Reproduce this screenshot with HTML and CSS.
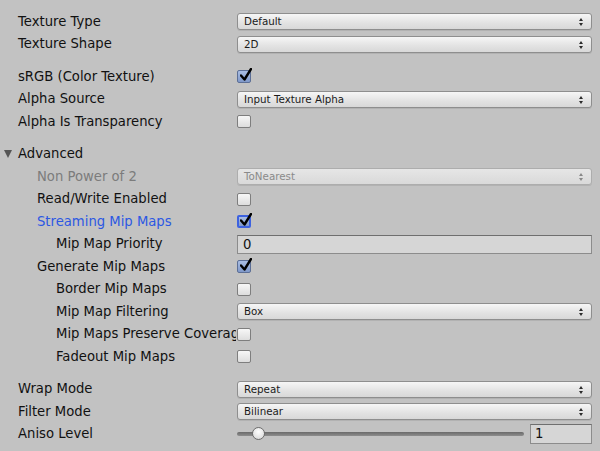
FILE: index.html
```html
<!DOCTYPE html>
<html>
<head>
<meta charset="utf-8">
<link rel="stylesheet" href="styles.css">
</head>
<body>
<div class="inspector">
  <div class="row"><div class="label">Texture Type</div><div class="dropdown">Default<span class="arrows"></span></div></div>
  <div class="row"><div class="label">Texture Shape</div><div class="dropdown">2D<span class="arrows"></span></div></div>
  <div class="spacer"></div>
  <div class="row"><div class="label">sRGB (Color Texture)</div><div class="check checked"></div></div>
  <div class="row"><div class="label">Alpha Source</div><div class="dropdown">Input Texture Alpha<span class="arrows"></span></div></div>
  <div class="row"><div class="label">Alpha Is Transparency</div><div class="check"></div></div>
  <div class="spacer"></div>
  <div class="row foldout"><span class="tri"></span><div class="label">Advanced</div></div>
  <div class="row l1"><div class="label disabled">Non Power of 2</div><div class="dropdown disabled">ToNearest<span class="arrows"></span></div></div>
  <div class="row l1"><div class="label">Read/Write Enabled</div><div class="check"></div></div>
  <div class="row l1"><div class="label blue">Streaming Mip Maps</div><div class="check checked focus"></div></div>
  <div class="row l2"><div class="label">Mip Map Priority</div><div class="field">0</div></div>
  <div class="row l1"><div class="label">Generate Mip Maps</div><div class="check checked"></div></div>
  <div class="row l2"><div class="label">Border Mip Maps</div><div class="check"></div></div>
  <div class="row l2"><div class="label">Mip Map Filtering</div><div class="dropdown">Box<span class="arrows"></span></div></div>
  <div class="row l2"><div class="label">Mip Maps Preserve Coverage</div><div class="check"></div></div>
  <div class="row l2"><div class="label">Fadeout Mip Maps</div><div class="check"></div></div>
  <div class="spacer"></div>
  <div class="row"><div class="label">Wrap Mode</div><div class="dropdown">Repeat<span class="arrows"></span></div></div>
  <div class="row"><div class="label">Filter Mode</div><div class="dropdown">Bilinear<span class="arrows"></span></div></div>
  <div class="row"><div class="label">Aniso Level</div>
    <div class="slider"><div class="track"></div><div class="thumb"></div></div>
    <div class="numfield">1</div>
  </div>
</div>
</body>
</html>
```

FILE: styles.css
```css
html, body {
  margin: 0;
  padding: 0;
  background: #c2c2c2;
}
body {
  width: 600px;
  height: 451px;
  overflow: hidden;
  font-family: "DejaVu Sans", "Noto Sans", sans-serif;
  color: #111111;
}
.inspector {
  padding: 10.5px 8px 0 0;
}
.row {
  display: flex;
  align-items: center;
  height: 22.5px;
  position: relative;
}
.spacer {
  height: 10px;
}
.label {
  width: 236px;
  margin-right: 1px;
  flex: none;
  box-sizing: border-box;
  padding-left: 18px;
  font-size: 13.2px;
  white-space: nowrap;
  overflow: hidden;
  line-height: 18px;
}
.l1 .label { padding-left: 37px; }
.l2 .label { padding-left: 56px; }
.label.disabled { color: #7c7c7c; }
.label.blue { color: #2c58e2; }

.foldout .label { width: auto; }
.tri {
  position: absolute;
  left: 4px;
  top: 7px;
  width: 0;
  height: 0;
  border-left: 4.5px solid transparent;
  border-right: 4.5px solid transparent;
  border-top: 8px solid #555;
}

.dropdown {
  flex: 1;
  height: 17px;
  box-sizing: border-box;
  border: 1px solid #8e8e8e;
  border-radius: 3px;
  background: linear-gradient(#f6f6f6, #e2e2e2 60%, #d8d8d8);
  box-shadow: 0 1px 0 rgba(0,0,0,0.08);
  font-size: 10.3px;
  line-height: 15px;
  padding-left: 6px;
  position: relative;
  color: #1a1a1a;
}
.dropdown.disabled {
  color: #8a8a8a;
  border-color: #adadad;
  background: linear-gradient(#e6e6e6, #d9d9d9);
}
.arrows {
  position: absolute;
  right: 7px;
  top: 4px;
  width: 5px;
  height: 8px;
}
.arrows::before, .arrows::after {
  content: "";
  position: absolute;
  left: 0;
  border-left: 2.5px solid transparent;
  border-right: 2.5px solid transparent;
}
.arrows::before {
  top: 0;
  border-bottom: 3px solid #2a2a2a;
}
.arrows::after {
  bottom: 0;
  border-top: 3px solid #2a2a2a;
}
.dropdown.disabled .arrows::before { border-bottom-color: #888; }
.dropdown.disabled .arrows::after { border-top-color: #888; }

.check {
  width: 14px;
  height: 13px;
  box-sizing: border-box;
  border: 1px solid #7e7e7e;
  border-radius: 2px;
  background: linear-gradient(#f7f7f7, #dddddd);
  position: relative;
  flex: none;
}
.check.checked {
  background: linear-gradient(#a9bde3, #7f98c9);
  border-color: #5c6f96;
}
.check.focus {
  border: 2px solid #3d62e0;
}
.check.checked::after {
  content: "";
  position: absolute;
  left: 2px;
  top: -3px;
  width: 12px;
  height: 13px;
  background: url("data:image/svg+xml;utf8,<svg xmlns='http://www.w3.org/2000/svg' width='12' height='13' viewBox='0 0 12 13'><path d='M1 7.5 L4.5 11.5 L11 1' fill='none' stroke='black' stroke-width='2.4' stroke-linecap='round' stroke-linejoin='round'/></svg>") no-repeat;
}
.check.focus.checked::after {
  left: 1px;
  top: -4px;
}

.field {
  flex: 1;
  height: 19px;
  box-sizing: border-box;
  border: 1px solid #8c8c8c;
  border-top-color: #6f6f6f;
  background: #d6d6d6;
  font-size: 13.2px;
  line-height: 17px;
  padding-left: 5px;
}

.slider {
  width: 287px;
  height: 16px;
  position: relative;
  flex: none;
}
.track {
  position: absolute;
  left: 0;
  right: 0;
  top: 6px;
  height: 4px;
  border-radius: 2px;
  background: linear-gradient(#6a6a6a, #8d8d8d);
}
.thumb {
  position: absolute;
  left: 15px;
  top: 1px;
  width: 13px;
  height: 13px;
  box-sizing: border-box;
  border-radius: 50%;
  border: 1px solid #6c6c6c;
  background: radial-gradient(circle at 50% 35%, #ffffff, #e0e0e0 70%, #c8c8c8);
}
.numfield {
  margin-left: 6px;
  flex: 1;
  height: 20px;
  box-sizing: border-box;
  border: 1px solid #8c8c8c;
  border-top-color: #6f6f6f;
  background: #d6d6d6;
  font-size: 13.2px;
  line-height: 18px;
  padding-left: 4px;
}
```
